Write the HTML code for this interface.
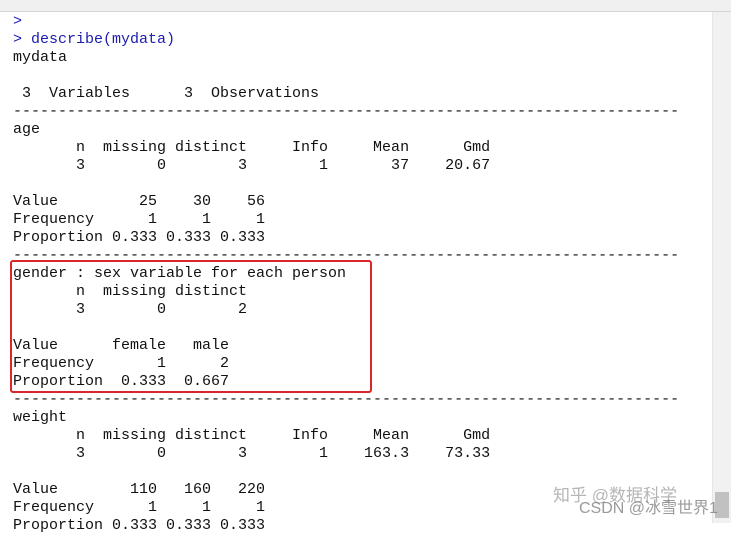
<!DOCTYPE html><html><head><style>
body{margin:0;width:731px;height:523px;overflow:hidden;background:#fff;position:relative;font-family:"Liberation Mono",monospace}
.top{position:absolute;left:0;top:0;width:731px;height:11px;background:#f0f0f0;border-bottom:1px solid #d4d4d4}
.sb{position:absolute;right:0;top:12px;width:18px;height:511px;background:#f1f1f1;border-left:1px solid #e6e6e6}
.th{position:absolute;right:2px;top:480px;width:14px;height:26px;background:#c1c1c1}
pre{position:absolute;left:13px;top:13px;margin:0;font-size:15px;line-height:18px;color:#111;font-family:"Liberation Mono",monospace}
.b{color:#1b1bb0}
.box{position:absolute;left:10px;top:260px;width:358px;height:129px;border:2px solid #d8282a;border-radius:3px}
.wm{position:absolute;left:553px;top:481px;white-space:nowrap;font:17px "Liberation Sans","Noto Sans CJK SC",sans-serif;color:rgba(150,150,150,.7)}
.wm2{position:absolute;left:579px;top:494px;white-space:nowrap;font:16px "Liberation Sans","Noto Sans CJK SC",sans-serif;color:rgba(120,120,120,.75)}
</style></head><body>
<div class="top"></div>
<pre><span class="b">&gt;
&gt; describe(mydata)</span>
mydata

 3  Variables      3  Observations
--------------------------------------------------------------------------
age
       n  missing distinct     Info     Mean      Gmd
       3        0        3        1       37    20.67

Value         25    30    56
Frequency      1     1     1
Proportion 0.333 0.333 0.333
--------------------------------------------------------------------------
gender : sex variable for each person
       n  missing distinct
       3        0        2

Value      female   male
Frequency       1      2
Proportion  0.333  0.667
--------------------------------------------------------------------------
weight
       n  missing distinct     Info     Mean      Gmd
       3        0        3        1    163.3    73.33

Value        110   160   220
Frequency      1     1     1
Proportion 0.333 0.333 0.333</pre>
<div class="box"></div>
<div class="sb"><div class="th"></div></div>
<div class="wm">知乎 @数据科学</div>
<div class="wm2">CSDN @冰雪世界1</div>
</body></html>
